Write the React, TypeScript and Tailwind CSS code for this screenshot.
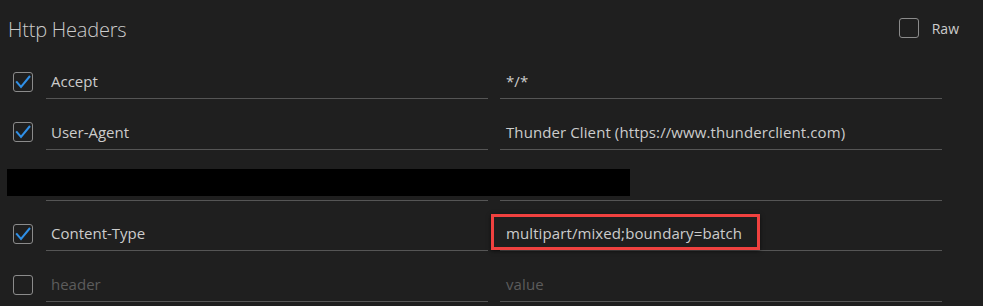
import React from "react";

type Row = {
  key: string;
  value: string;
  checked: boolean;
  placeholder?: boolean;
  redacted?: boolean;
  highlight?: boolean;
};

const rows: Row[] = [
  { key: "Accept", value: "*/*", checked: true },
  { key: "User-Agent", value: "Thunder Client (https://www.thunderclient.com)", checked: true },
  { key: "", value: "", checked: true, redacted: true },
  { key: "Content-Type", value: "multipart/mixed;boundary=batch", checked: true, highlight: true },
  { key: "header", value: "value", checked: false, placeholder: true },
];

function Checkbox({ checked }: { checked: boolean }) {
  return (
    <div className="w-5 h-5 shrink-0 rounded-[3px] border border-[#8b8b8b] flex items-center justify-center">
      {checked && (
        <svg width="20" height="20" viewBox="0 0 20 20" className="-m-px">
          <path d="M3.2 9.4 L8 15 L17 4" fill="none" stroke="#2f8fe6" strokeWidth="2" />
        </svg>
      )}
    </div>
  );
}

function HeaderRow({ row }: { row: Row }) {
  const textColor = row.placeholder ? "text-[#5c5c5c]" : "text-[#cccccc]";
  return (
    <div className="relative flex items-center h-[35px] pl-[13px]">
      <Checkbox checked={row.checked} />
      <div className={`ml-[13px] w-[442px] h-full flex items-center px-[5px] border-b border-[#555555] ${textColor}`}>
        {row.key}
      </div>
      <div className={`relative ml-3 w-[442px] h-full flex items-center px-[6px] tracking-[0.1px] border-b border-[#555555] ${textColor}`}>
        {row.value}
        {row.highlight && (
          <div className="absolute top-[-2px] left-[-9px] w-[269px] h-[36px] border-[3px] border-[#f0413f] shadow-[0_1px_4px_rgba(0,0,0,0.6)]" />
        )}
      </div>
      {row.redacted && <div className="absolute left-[7px] top-[3.5px] w-[623px] h-[27px] bg-black" />}
    </div>
  );
}

export default function App() {
  return (
    <div className="w-[983px] h-[306px] bg-[#1f1f1f] overflow-hidden font-['Open_Sans',sans-serif] text-[15px]">
      <div className="h-[56px] flex items-center justify-between pl-2 pr-[24px]">
        <h1 className="text-[20px] font-light text-[#cccccc] tracking-[-0.2px] pt-[3px]">Http Headers</h1>
        <label className="flex items-center gap-[13px] text-[14px] text-[#cccccc]">
          <Checkbox checked={false} />
          <span>Raw</span>
        </label>
      </div>
      <div className="pt-2 flex flex-col gap-[15.75px]">
        {rows.map((r, i) => (
          <HeaderRow key={i} row={r} />
        ))}
      </div>
    </div>
  );
}
